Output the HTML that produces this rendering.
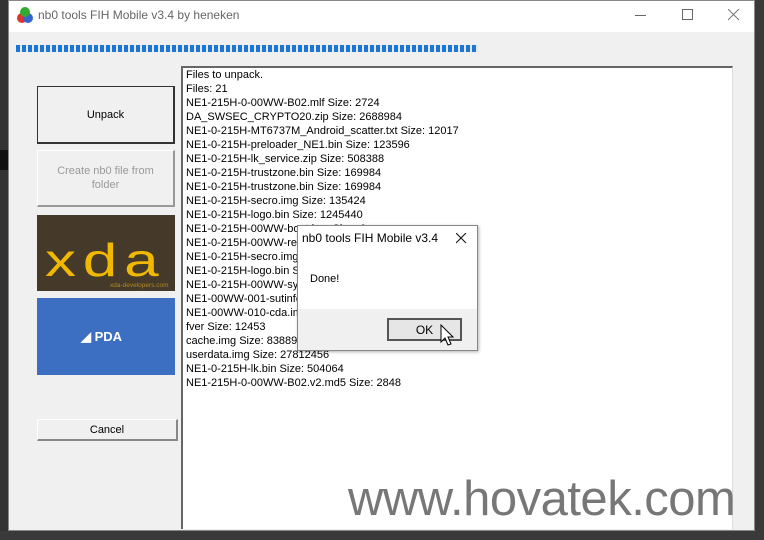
<!DOCTYPE html>
<html><head><style>
*{margin:0;padding:0;box-sizing:border-box}
body{width:764px;height:540px;overflow:hidden;background:#4a4a4a;position:relative;font-family:"Liberation Sans",Arial,sans-serif}
.a{position:absolute}
.win{left:8px;top:0;width:747px;height:531px;background:#f0f0f0;border:1px solid #888}
.title{left:0;top:0;width:745px;height:31px;background:#fff}
.btn{background:#f0f0f0;font-size:11px;color:#000;text-align:center;display:flex;align-items:center;justify-content:center}
.list{left:181px;top:66px;width:552px;height:463px;background:#fff;border-left:2px solid #666;border-top:2px solid #666;border-right:1px solid #ddd;font-size:11px;line-height:14px;padding:0 0 0 3px;white-space:pre;color:#000}
</style></head><body>
<div class="a" style="left:0;top:0;width:8px;height:540px;background:#333"></div>
<div class="a" style="left:0;top:150px;width:8px;height:20px;background:#111"></div>
<div class="a win">
 <div class="a title"></div>
</div>
<svg class="a" style="left:16px;top:6px" width="18" height="18"><circle cx="6" cy="12" r="5" fill="#d33"/><circle cx="12" cy="12" r="5" fill="#36c"/><circle cx="9" cy="6" r="5" fill="#3a3"/></svg>
<div class="a" style="left:38px;top:8px;font-size:12px;color:#666">nb0 tools FIH Mobile v3.4 by heneken</div>
<div class="a" style="left:635px;top:15px;width:11px;height:1px;background:#666"></div>
<div class="a" style="left:682px;top:9px;width:11px;height:11px;border:1px solid #666"></div>
<svg class="a" style="left:728px;top:9px" width="12" height="12"><path d="M0 0L11 11M11 0L0 11" stroke="#777" stroke-width="1"/></svg>
<div class="a" style="left:16px;top:45px;width:462px;height:7px;background:repeating-linear-gradient(90deg,#1a78d4 0 4px,#e8e8e8 4px 6px)"></div>
<div class="a btn" style="left:37px;top:86px;width:138px;height:58px;border:1px solid #333;border-right:2px solid #333;border-bottom:2px solid #333">Unpack</div>
<div class="a btn" style="left:37px;top:150px;width:138px;height:57px;border:1px solid #fff;border-right:2px solid #999;border-bottom:2px solid #999;color:#999;line-height:14px">Create nb0 file from<br>folder</div>
<div class="a" style="left:37px;top:215px;width:138px;height:76px;background:#45392a;overflow:hidden">
 <div class="a" style="left:8px;top:22px;font-size:46px;line-height:1;color:#f0b800;letter-spacing:5px;transform:scaleX(1.35);transform-origin:0 0">xda</div>
 <div class="a" style="left:73px;top:67px;font-size:6.5px;color:#b08a20;white-space:nowrap">xda-developers.com</div>
</div>
<div class="a" style="left:37px;top:298px;width:138px;height:77px;background:#3c6fc2">
 <div class="a" style="left:44px;top:31px;font-size:13px;font-weight:bold;color:#fff">◢ PDA</div>
</div>
<div class="a btn" style="left:37px;top:419px;width:141px;height:22px;border:1px solid #fff;border-right:2px solid #888;border-bottom:2px solid #888">Cancel</div>
<div class="a list">Files to unpack.
Files: 21
NE1-215H-0-00WW-B02.mlf Size: 2724
DA_SWSEC_CRYPTO20.zip Size: 2688984
NE1-0-215H-MT6737M_Android_scatter.txt Size: 12017
NE1-0-215H-preloader_NE1.bin Size: 123596
NE1-0-215H-lk_service.zip Size: 508388
NE1-0-215H-trustzone.bin Size: 169984
NE1-0-215H-trustzone.bin Size: 169984
NE1-0-215H-secro.img Size: 135424
NE1-0-215H-logo.bin Size: 1245440
NE1-0-215H-00WW-boot.img Size: 0
NE1-0-215H-00WW-recovery.img Size: 0
NE1-0-215H-secro.img Size: 0
NE1-0-215H-logo.bin Size: 0
NE1-0-215H-00WW-system.img Size: 0
NE1-00WW-001-sutinfo Size: 0
NE1-00WW-010-cda.img Size: 0
fver Size: 12453
cache.img Size: 8388932
userdata.img Size: 27812456
NE1-0-215H-lk.bin Size: 504064
NE1-215H-0-00WW-B02.v2.md5 Size: 2848</div>
<div class="a" style="left:297px;top:225px;width:181px;height:126px;background:#fff;border:1px solid #888;box-shadow:1px 1px 3px rgba(0,0,0,.3)">
 <div class="a" style="left:4px;top:5px;font-size:12px;color:#000">nb0 tools FIH Mobile v3.4</div>
 <svg class="a" style="left:158px;top:7px" width="11" height="11"><path d="M0 0L10 10M10 0L0 10" stroke="#222" stroke-width="1.2"/></svg>
 <div class="a" style="left:12px;top:47px;font-size:11px;color:#000">Done!</div>
 <div class="a" style="left:0;top:83px;width:179px;height:41px;background:#f0f0f0"></div>
 <div class="a btn" style="left:89px;top:92px;width:75px;height:23px;border:2px solid #555;background:#e6e6e6;font-size:12px">OK</div>
</div>
<svg class="a" style="left:440px;top:324px" width="14" height="24"><path d="M1 1 L1 18 L5 14 L8 21 L11 20 L8 13 L13 13 Z" fill="#fff" stroke="#000" stroke-width="1"/></svg>
<div class="a" style="left:348px;top:471px;font-size:49px;color:#777;letter-spacing:-0.5px">www.hovatek.com</div>
<div class="a" style="left:0;top:531px;width:764px;height:9px;background:#3a3a3a"></div>
<div class="a" style="left:755px;top:0;width:9px;height:540px;background:#3a3a3a"></div>
</body></html>
